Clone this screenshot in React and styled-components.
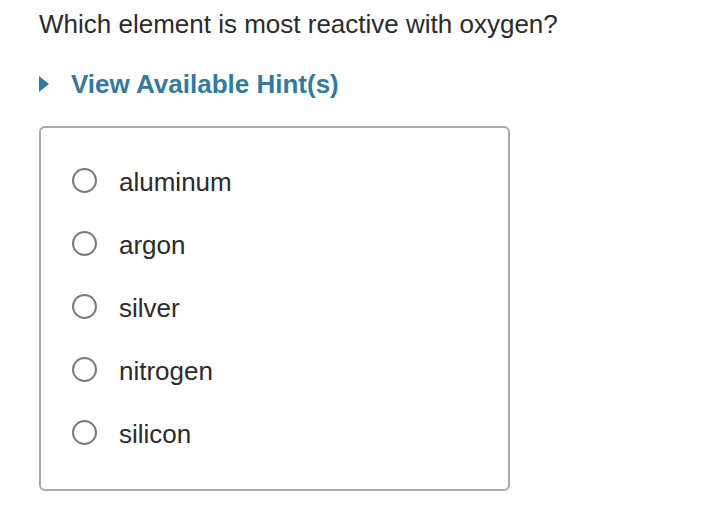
import React from "react";
import styled, { createGlobalStyle } from "styled-components";

const Global = createGlobalStyle`
  html, body { margin: 0; padding: 0; background: #fff; }
  body { font-family: "Liberation Sans", Arial, sans-serif; }
`;

const Page = styled.div`
  padding: 9px 0 0 39px;
  width: 706px;
  box-sizing: border-box;
`;

const Question = styled.div`
  font-size: 26px;
  line-height: 30px;
  color: #2b2b2b;
`;

const Hint = styled.div`
  display: flex;
  align-items: center;
  margin-top: 30px;
  height: 30px;
  gap: 22px;
  color: #347a9c;
  font-weight: bold;
  font-size: 26px;
`;

const Triangle = styled.span`
  width: 0;
  height: 0;
  border-top: 8px solid transparent;
  border-bottom: 8px solid transparent;
  border-left: 10px solid #347a9c;
`;

const Box = styled.div`
  margin-top: 27px;
  width: 471px;
  height: 365px;
  box-sizing: border-box;
  border: 2px solid #a9a9a9;
  border-radius: 6px;
  padding: 36px 0 0 31px;
  display: flex;
  flex-direction: column;
  gap: 27px;
`;

const Option = styled.label`
  display: flex;
  align-items: center;
  gap: 22px;
  height: 36px;
  font-size: 26px;
  color: #2b2b2b;
`;

const Radio = styled.span`
  width: 25px;
  height: 25px;
  box-sizing: border-box;
  border: 2px solid #7a7a7a;
  border-radius: 50%;
  flex-shrink: 0;
  margin-top: -3px;
`;

const options = ["aluminum", "argon", "silver", "nitrogen", "silicon"];

export default function App() {
  return (
    <Page>
      <Global />
      <Question>Which element is most reactive with oxygen?</Question>
      <Hint>
        <Triangle />
        <span>View Available Hint(s)</span>
      </Hint>
      <Box>
        {options.map((o) => (
          <Option key={o}>
            <Radio />
            <span>{o}</span>
          </Option>
        ))}
      </Box>
    </Page>
  );
}
